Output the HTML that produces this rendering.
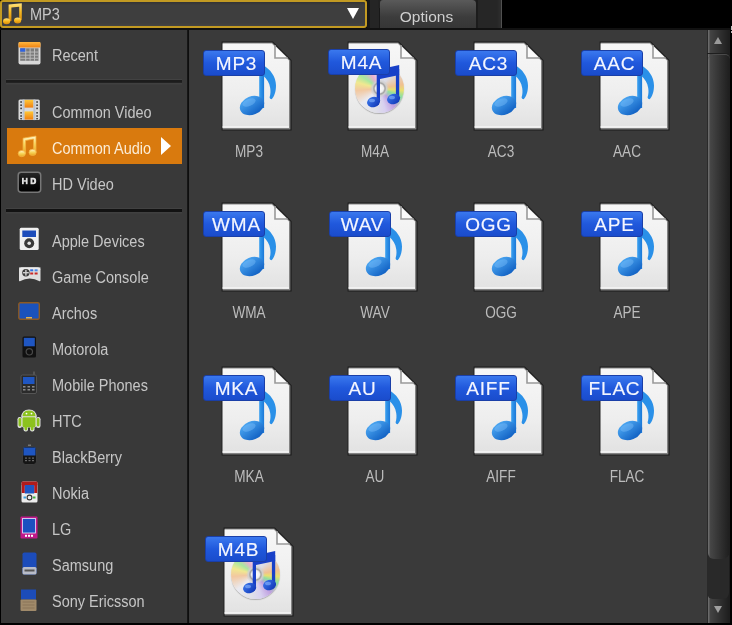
<!DOCTYPE html>
<html><head><meta charset="utf-8"><style>
*{box-sizing:border-box}
#root{position:absolute;left:0;top:0;width:732px;height:625px;overflow:hidden;background:#000;filter:blur(0.6px)}
body{margin:0;width:732px;height:625px;background:#000;position:relative;overflow:hidden;font-family:"Liberation Sans",sans-serif}
.a{position:absolute}
#dd{left:0;top:0;width:367px;height:28px;border:2px solid #c29a22;border-radius:3px;background:linear-gradient(#333 0,#3e3e3e 3px,#3e3e3e 21px,#444 24px)}
#ddtxt{left:28px;top:5px;font-size:14.5px;color:#c8c8c8;line-height:16px;transform:scaleY(1.12);transform-origin:0 9px}
#ddarr{left:345px;top:6px;width:0;height:0;border-left:6px solid transparent;border-right:6px solid transparent;border-top:11px solid #fff}
#gap{left:367px;top:0;width:13px;height:28px;background:linear-gradient(90deg,#161616 0,#1a1a1a 3px,#252525 3.5px,#252525 12px,#181818 12.5px)}
#tab{left:380px;top:0;width:96px;height:28px;border-radius:3px 4px 0 0;background:linear-gradient(#5a5a5a,#3c3c3c 60%,#363636);color:#cfcfcf;font-size:15.5px;text-align:center;line-height:33px;padding-right:3px}
#tr{left:476px;top:0;width:26px;height:28px;background:linear-gradient(90deg,#1c1c1c 0,#1c1c1c 1.5px,#262626 2px,#262626 21px,#2c2c2c 24px);border-right:1.5px solid #505050}
#hl{left:0;top:28px;width:732px;height:2px;background:#111}
#side{left:1px;top:30px;width:187px;height:593px;background:#393939}
#div{left:187px;top:30px;width:2px;height:593px;background:linear-gradient(90deg,#1a1a1a,#0a0a0a)}
#main{left:189px;top:30px;width:518px;height:593px;background:#3a3a3a}
#sb{z-index:0;left:707px;top:30px;width:23px;height:593px;background:linear-gradient(90deg,#2a2a2a 0,#2a2a2a 1px,#6a6a6a 1px,#6a6a6a 2px,#444 3px,#1e1e1e 22px)}
#bot{left:0;top:623px;width:732px;height:2px;background:#000}
.sep{left:6px;width:176px;height:3px;background:#1e1e1e;box-shadow:0 -1px 0 #424242,0 1.5px 0 #404040}
.it{left:52px;font-size:14.5px;transform:scaleY(1.12);transform-origin:0 8.5px;color:#c6c6c6;height:16px;line-height:16px;white-space:nowrap}
.it.sel{color:#fbecd6}
#sel{left:7px;top:128px;width:175px;height:36px;background:#d97a0e}
#selarr{left:161px;top:137px;width:0;height:0;border-top:9.5px solid transparent;border-bottom:9.5px solid transparent;border-left:10px solid #fff}
.doc{overflow:visible}
.lbl{width:126px;font-size:13.6px;transform:scaleY(1.2);transform-origin:0 12.7px;color:#bcbcbc;text-align:center;line-height:15px}
.tg{width:62px;height:25.5px;border-radius:3px;background:linear-gradient(#3a78ee,#2058dc 50%,#1a4ccc);border:1px solid #1a3fa8;color:#f4f6ff;font-size:19px;letter-spacing:0.8px;text-indent:5px;line-height:25px;-webkit-text-stroke:0.15px #f4f6ff;text-align:center}
.cd{width:49px;height:49px;border-radius:50%;background:radial-gradient(circle,#fff 0,#f0f0f0 4px,#a0a0a0 5.5px,#d0d0d0 7px,rgba(230,230,235,0) 9.5px),conic-gradient(from 0deg,#e4e4ec 0deg,#dcdce6 40deg,#f0c090 80deg,#e8e070 95deg,#90e0a0 110deg,#c0a0e0 140deg,#d8d0f0 165deg,#e0e0e8 190deg,#eaeaf0 230deg,#f2c8a0 265deg,#f0e890 285deg,#a8e8a0 305deg,#e8b0d0 330deg,#e4e4ec 360deg);box-shadow:0 1px 1px rgba(0,0,0,.25)}
#sbup{left:0;top:0;width:23px;height:24px;border-bottom:1px solid #1e1e1e}
#sbup:after{content:"";position:absolute;left:7px;top:7px;border-left:4px solid transparent;border-right:4px solid transparent;border-bottom:7.5px solid #9a9a9a}
#thumb{left:1px;top:24px;width:22px;height:505px;border-radius:6px 5px 8px 6px;background:linear-gradient(90deg,#6a6a6a 0,#6a6a6a 1px,#474747 2px,#3a3a3a 8px,#1f1f1f 21px);border-top:1px solid #4a4a4a}
#track{left:0;top:515px;width:22px;height:54px;background:#292929;border-radius:0 0 6px 6px;z-index:-1}
#sbdn{left:0;top:566px;width:23px;height:27px;z-index:-2}
#sbdn:after{content:"";position:absolute;left:7px;top:10px;border-left:4px solid transparent;border-right:4px solid transparent;border-top:7.5px solid #a0a0a0}
.wm{left:731px;width:1px;background:#bdbdbd}
#div2{left:189px;top:30px;width:1px;height:593px;background:#404040}
#tabbg{left:378px;top:0;width:100px;height:8px;background:#222}

</style></head><body><div id="root">
<div class="a" id="dd"><div class="a" id="ddnote"></div><span class="a" id="ddtxt">MP3</span><div class="a" id="ddarr"></div></div>
<div class="a" id="gap"></div>
<div class="a" id="tabbg"></div>
<div class="a" id="tab"><span>Options</span></div>
<div class="a" id="tr"></div>
<div class="a" id="hl"></div>
<div class="a" id="side"></div>
<div class="a" id="div"></div>
<div class="a" id="div2"></div>
<div class="a" id="main"></div>
<div class="a" id="sb"><div class="a" id="sbup"></div><div class="a" id="thumb"></div><div class="a" id="track"></div><div class="a" id="sbdn"></div></div>
<div class="a" id="bot"></div>
<div class="a wm" style="top:26px;height:4px"></div><div class="a wm" style="top:31px;height:2px"></div>
<div class="a sep" style="top:80px;height:3px;background:linear-gradient(#1c1c1c 70%,#2a2a2a)"></div>
<div class="a sep" style="top:209px;height:2.5px;background:#121212"></div>
<div class="a" id="sel"></div>
<div class="a" id="selarr"></div>
<svg width="0" height="0" style="position:absolute">
<defs>
<linearGradient id="paper" x1="0" y1="0" x2="0" y2="1"><stop offset="0" stop-color="#f7f7f7"/><stop offset="0.6" stop-color="#eeeeee"/><stop offset="1" stop-color="#e2e2e2"/></linearGradient>
<linearGradient id="blue" x1="0.2" y1="0" x2="0.6" y2="1"><stop offset="0" stop-color="#4eaaf4"/><stop offset="1" stop-color="#1262c4"/></linearGradient>
<symbol id="paperdoc" viewBox="0 0 74 94">
<path d="M1.6 2.4 H52.8 L71.6 21.2 V91.6 H1.6 Z" fill="#141414" opacity="0.8"/>
<path d="M2.6 3.4 H52.3 L70.4 21.5 V90.4 H2.6 Z" fill="#848484"/>
<path d="M2.6 4.4 H51.8 L69 21.6 V88.8 H2.6 Z" fill="url(#paper)"/>
<rect x="2.6" y="87.2" width="66.4" height="1.6" fill="#f4f4f4"/>
<path d="M55.2 7 V18.6 H67 Z" fill="#fbfbfb"/>
<path d="M55 6 V19 H67.8" fill="none" stroke="#9a9a9a" stroke-width="1.6"/>
</symbol>
<symbol id="ndoc" viewBox="0 0 74 94">
<use href="#paperdoc"/>
<linearGradient id="stemg" x1="0" y1="0" x2="1" y2="0"><stop offset="0" stop-color="#3aa0f0"/><stop offset="1" stop-color="#1a78d8"/></linearGradient>
<rect x="39.2" y="22" width="4.9" height="47" fill="url(#stemg)"/>
<path d="M43 26 C50 30 56 37.5 56 46.5 C56 53 54.2 57.5 51.6 60.3 C50.6 60.3 49.6 59.5 49.6 58.3 C50.6 55 50.7 52 50.2 49 C49.6 44 47 40 43 36.5 Z" fill="#2a90e8"/>
<ellipse cx="32" cy="66.5" rx="12.6" ry="9.1" transform="rotate(-22 32 66.5)" fill="url(#blue)"/>
<ellipse cx="29" cy="63.5" rx="7" ry="3.5" transform="rotate(-22 29 63.5)" fill="#8cc8ff" opacity="0.35"/>
</symbol>
<symbol id="cdnotes" viewBox="0 0 74 94">
<linearGradient id="nb" x1="0" y1="0" x2="1" y2="1"><stop offset="0" stop-color="#3d7cf0"/><stop offset="1" stop-color="#0c2fb0"/></linearGradient>
<path d="M30.7 31 L53.2 26 V36 L34 40 V61 H30.7 Z" fill="#1840c8"/>
<rect x="49.9" y="30" width="3.3" height="29" fill="#1840c8"/>
<ellipse cx="27.6" cy="63" rx="6.6" ry="5.2" transform="rotate(-15 27.6 63)" fill="url(#nb)"/>
<ellipse cx="47.6" cy="60" rx="6.6" ry="5.2" transform="rotate(-15 47.6 60)" fill="url(#nb)"/>
<ellipse cx="26" cy="61.5" rx="3" ry="1.8" fill="#8ab8ff" opacity="0.6"/>
<ellipse cx="46" cy="58.5" rx="3" ry="1.8" fill="#8ab8ff" opacity="0.6"/>
</symbol>
</defs></svg>
<svg class="a" style="left:0;top:0" width="44" height="30" viewBox="0 0 44 30">
<defs><linearGradient id="gold" x1="0" y1="0" x2="0" y2="1"><stop offset="0" stop-color="#ffe27a"/><stop offset="0.5" stop-color="#f5b71f"/><stop offset="1" stop-color="#d98a0a"/></linearGradient></defs>
<path d="M8.6 4.5 L21.8 3.3 V20 H19.2 V6.8 L11.4 7.6 V21 H8.6 Z" fill="url(#gold)"/>
<ellipse cx="6.6" cy="21.3" rx="3.6" ry="3" fill="url(#gold)"/>
<ellipse cx="17.6" cy="20.4" rx="3.6" ry="3" fill="url(#gold)"/>
</svg>
<svg class="a" style="left:17px;top:41px" width="25" height="25" viewBox="0 0 25 25">
<defs><linearGradient id="calo" x1="0" y1="0" x2="0" y2="1"><stop offset="0" stop-color="#ffb640"/><stop offset="1" stop-color="#ee8210"/></linearGradient></defs>
<rect x="1.5" y="1" width="22" height="22.5" rx="2" fill="#d8d8d8"/>
<rect x="1.5" y="1" width="22" height="5.5" rx="1" fill="url(#calo)"/>
<rect x="3.2" y="7.3" width="18.3" height="12.5" fill="#7c7c7c"/>
<g fill="#bdbdbd"><rect x="8.2" y="7.3" width="1" height="12.5"/><rect x="12.6" y="7.3" width="1" height="12.5"/><rect x="17" y="7.3" width="1" height="12.5"/><rect x="3.2" y="10.6" width="18.3" height="0.9"/><rect x="3.2" y="13.7" width="18.3" height="0.9"/><rect x="3.2" y="16.8" width="18.3" height="0.9"/></g>
<rect x="3.2" y="7.3" width="5" height="3.4" fill="#2f63e0"/>
</svg>
<svg class="a" style="left:18px;top:99px" width="23" height="22" viewBox="0 0 23 22">
<defs><linearGradient id="flg" x1="0" y1="0" x2="0" y2="1"><stop offset="0" stop-color="#ffc838"/><stop offset="1" stop-color="#f07e10"/></linearGradient></defs>
<rect x="0.5" y="0.6" width="21.3" height="20.5" rx="1.5" fill="#dadada"/>
<rect x="4.6" y="0.6" width="2" height="20.5" fill="#b8c4d4"/><rect x="15.4" y="0.6" width="2" height="20.5" fill="#b8c4d4"/>
<rect x="6.6" y="0.9" width="8.6" height="7.7" fill="url(#flg)"/>
<rect x="6.6" y="12.4" width="8.6" height="8.2" fill="url(#flg)"/>
<g fill="#4a4a4a"><rect x="2.2" y="2.2" width="1.8" height="1.6"/><rect x="2.2" y="5.4" width="1.8" height="1.6"/><rect x="2.2" y="8.6" width="1.8" height="1.6"/><rect x="2.2" y="13" width="1.8" height="1.6"/><rect x="2.2" y="16.2" width="1.8" height="1.6"/><rect x="2.2" y="19" width="1.8" height="1.4"/>
<rect x="18.2" y="2.2" width="1.8" height="1.6"/><rect x="18.2" y="5.4" width="1.8" height="1.6"/><rect x="18.2" y="8.6" width="1.8" height="1.6"/><rect x="18.2" y="13" width="1.8" height="1.6"/><rect x="18.2" y="16.2" width="1.8" height="1.6"/><rect x="18.2" y="19" width="1.8" height="1.4"/></g>
</svg>
<svg class="a" style="left:17px;top:135px" width="22" height="24" viewBox="0 0 22 24">
<defs><linearGradient id="gold2" x1="0" y1="0" x2="0" y2="1"><stop offset="0" stop-color="#fff8d0"/><stop offset="0.45" stop-color="#f8d860"/><stop offset="1" stop-color="#e8a820"/></linearGradient></defs>
<g stroke="#f4b040" stroke-width="0.8"><path d="M6 3.2 L19 1 V17.5 H16.6 V4 L8.6 5.6 V18.5 H6 Z" fill="url(#gold2)"/>
<ellipse cx="4.8" cy="18.6" rx="3.6" ry="3.1" fill="url(#gold2)"/>
<ellipse cx="15.6" cy="17.4" rx="3.6" ry="3.1" fill="url(#gold2)"/></g>
</svg>
<svg class="a" style="left:17px;top:171px" width="25" height="23" viewBox="0 0 25 23">
<defs><linearGradient id="hdg" x1="0" y1="0" x2="0" y2="1"><stop offset="0" stop-color="#2a2a2a"/><stop offset="0.5" stop-color="#0c0c0c"/><stop offset="1" stop-color="#000"/></linearGradient></defs>
<rect x="1.2" y="1.2" width="22.5" height="20" rx="3" fill="url(#hdg)" stroke="#777" stroke-width="1.5"/>
<g fill="#e0e0e0"><rect x="5" y="6.8" width="1.8" height="6.4"/><rect x="8.8" y="6.8" width="1.8" height="6.4"/><rect x="6.5" y="9.2" width="2.5" height="1.5"/>
<path d="M13.5 6.8 H16.5 Q19.2 6.8 19.2 10 Q19.2 13.2 16.5 13.2 H13.5 Z M15.4 8.5 V11.5 H16.2 Q17.2 11.5 17.2 10 Q17.2 8.5 16.2 8.5 Z"/></g>
</svg>
<svg class="a" style="left:19px;top:227px" width="21" height="24" viewBox="0 0 21 24">
<rect x="0.7" y="0.7" width="19" height="22.3" rx="1.5" fill="#f0f0f0"/>
<rect x="3.3" y="3.5" width="13.7" height="6.5" fill="#1c4cba"/>
<circle cx="10.2" cy="16.2" r="5" fill="#3a3a3a"/>
<circle cx="10.2" cy="16.2" r="1.8" fill="#e8e8e8"/>
</svg>
<svg class="a" style="left:18px;top:266px" width="24" height="17" viewBox="0 0 24 17">
<path d="M1 4 Q1 1.5 3.5 1.3 H19.5 Q22.5 1.5 22.5 4 V14.5 Q22.5 15.6 21 15 Q17 12.5 11.7 12.5 Q6.5 12.5 2.5 15 Q1 15.6 1 14.5 Z" fill="#dedede"/>
<rect x="1" y="1.3" width="21.5" height="2.5" fill="#f2f2f2" opacity="0.7"/>
<circle cx="7.9" cy="6.7" r="3.7" fill="#3a3a3a"/>
<rect x="7.2" y="3.8" width="1.4" height="5.8" fill="#cfcfcf"/><rect x="5" y="6" width="5.8" height="1.4" fill="#cfcfcf"/>
<rect x="12.2" y="3.3" width="3" height="2" fill="#3370e0"/><rect x="16.6" y="3.3" width="3" height="2" fill="#4a8ae8"/>
<rect x="12.2" y="6.5" width="3" height="2" fill="#c82828"/><rect x="16.6" y="6.5" width="3" height="2" fill="#c82828"/>
</svg>
<svg class="a" style="left:18px;top:302px" width="22" height="18" viewBox="0 0 22 18">
<rect x="0.8" y="0.8" width="20.5" height="16.5" rx="1.5" fill="#1b52bc" stroke="#8e5a22" stroke-width="1.4"/>
<rect x="8" y="15" width="6" height="1.5" fill="#e0b050"/>
</svg>
<svg class="a" style="left:22px;top:336px" width="15" height="22" viewBox="0 0 15 22">
<rect x="0.5" y="0.5" width="13.5" height="21" rx="1.5" fill="#111"/>
<rect x="1.8" y="1.8" width="11" height="8.5" fill="#1f56c2"/>
<circle cx="7.3" cy="15.8" r="3.2" fill="none" stroke="#4a4a4a" stroke-width="1.2"/>
</svg>
<svg class="a" style="left:20px;top:371px" width="18" height="23" viewBox="0 0 18 23">
<rect x="13" y="0.5" width="2" height="5" fill="#555"/>
<rect x="1" y="4" width="15.5" height="18.5" rx="1.5" fill="#2a2a2a" stroke="#555" stroke-width="1"/>
<rect x="3" y="6" width="11.5" height="7" fill="#1f56c2"/>
<g fill="#8a8a8a"><rect x="3" y="15" width="2.5" height="1.5"/><rect x="7.5" y="15" width="2.5" height="1.5"/><rect x="12" y="15" width="2.5" height="1.5"/><rect x="3" y="18" width="2.5" height="1.5"/><rect x="7.5" y="18" width="2.5" height="1.5"/><rect x="12" y="18" width="2.5" height="1.5"/></g>
</svg>
<svg class="a" style="left:17px;top:408px" width="24" height="24" viewBox="0 0 24 24">
<g fill="#fff" opacity="0.85"><rect x="4.5" y="5.5" width="15" height="14" rx="2"/><rect x="0.5" y="9" width="4.5" height="11" rx="2.2"/><rect x="19" y="9" width="4.5" height="11" rx="2.2"/><path d="M4.5 9 Q4.5 1.5 12 1.5 Q19.5 1.5 19.5 9 Z"/><rect x="6.5" y="17" width="4.5" height="6.5" rx="2"/><rect x="13" y="17" width="4.5" height="6.5" rx="2"/></g>
<g fill="#8cc21e"><rect x="5.5" y="9.2" width="13" height="10" rx="1.2"/><rect x="1.5" y="10" width="2.8" height="8.5" rx="1.4"/><rect x="19.7" y="10" width="2.8" height="8.5" rx="1.4"/><path d="M5.5 8.2 Q5.5 2.5 12 2.5 Q18.5 2.5 18.5 8.2 Z"/><rect x="7.5" y="17" width="2.8" height="5.5" rx="1.4"/><rect x="13.7" y="17" width="2.8" height="5.5" rx="1.4"/></g>
<circle cx="9.5" cy="5.6" r="0.9" fill="#fff"/><circle cx="14.5" cy="5.6" r="0.9" fill="#fff"/>
</svg>
<svg class="a" style="left:22px;top:444px" width="15" height="21" viewBox="0 0 15 21">
<rect x="6" y="0.5" width="3" height="2" fill="#777"/>
<rect x="0.5" y="2.5" width="14" height="18" rx="3" fill="#151515" stroke="#444" stroke-width="0.8"/>
<rect x="1.5" y="3.5" width="12" height="8" fill="#1f56c2"/>
<g fill="#6a6a6a"><rect x="3" y="13.5" width="2" height="1.2"/><rect x="6.5" y="13.5" width="2" height="1.2"/><rect x="10" y="13.5" width="2" height="1.2"/><rect x="3" y="16" width="2" height="1.2"/><rect x="6.5" y="16" width="2" height="1.2"/><rect x="10" y="16" width="2" height="1.2"/></g>
</svg>
<svg class="a" style="left:21px;top:481px" width="17" height="22" viewBox="0 0 17 22">
<rect x="0.5" y="0.5" width="16" height="21" rx="1.5" fill="#ececec"/>
<rect x="0.5" y="0.5" width="16" height="4" rx="1" fill="#b01c1c"/>
<rect x="0.8" y="3" width="3" height="9" fill="#b81818"/><rect x="13.2" y="3" width="3" height="9" fill="#b81818"/>
<rect x="3.8" y="4" width="9.4" height="8.5" fill="#1f56c2"/>
<circle cx="8.5" cy="16.5" r="2.4" fill="none" stroke="#333" stroke-width="1.1"/>
<rect x="2.5" y="15.5" width="2.5" height="2" fill="#3aa0e0"/><rect x="12" y="15.5" width="2.5" height="2" fill="#40b040"/>
</svg>
<svg class="a" style="left:20px;top:516px" width="18" height="23" viewBox="0 0 18 23">
<rect x="0.5" y="0.5" width="17" height="22" rx="1" fill="#c0188a"/>
<rect x="2.6" y="2.5" width="12.8" height="14.5" fill="#1c50c0" stroke="#e8e8ff" stroke-width="0.8"/>
<rect x="5" y="18.8" width="2" height="2" fill="#fff"/><rect x="8" y="18.8" width="2" height="2" fill="#fff"/><rect x="11" y="18.8" width="2" height="2" fill="#fff"/>
</svg>
<svg class="a" style="left:22px;top:552px" width="15" height="23" viewBox="0 0 15 23">
<rect x="0.5" y="0.5" width="14" height="22" rx="1.8" fill="#1c4cba"/>
<rect x="0.5" y="15" width="14" height="7.5" rx="1.5" fill="#b8bcc8"/>
<rect x="2.5" y="17.5" width="10" height="2" fill="#555"/>
</svg>
<svg class="a" style="left:20px;top:589px" width="17" height="23" viewBox="0 0 17 23">
<rect x="1" y="0.5" width="15" height="10" fill="#1c4cb8"/>
<rect x="0.5" y="10.5" width="16" height="11.5" rx="1" fill="#a08a6a"/>
<g fill="#8a7558"><rect x="2.5" y="12.5" width="12" height="1"/><rect x="2.5" y="15.5" width="12" height="1"/><rect x="2.5" y="18.5" width="12" height="1"/></g>
</svg>
<div class="a it" style="top:47px">Recent</div>
<div class="a it" style="top:104px">Common Video</div>
<div class="a it sel" style="top:140px">Common Audio</div>
<div class="a it" style="top:176px">HD Video</div>
<div class="a it" style="top:233px">Apple Devices</div>
<div class="a it" style="top:269px">Game Console</div>
<div class="a it" style="top:305px">Archos</div>
<div class="a it" style="top:341px">Motorola</div>
<div class="a it" style="top:377px">Mobile Phones</div>
<div class="a it" style="top:413px">HTC</div>
<div class="a it" style="top:449px">BlackBerry</div>
<div class="a it" style="top:485px">Nokia</div>
<div class="a it" style="top:521px">LG</div>
<div class="a it" style="top:557px">Samsung</div>
<div class="a it" style="top:593px">Sony Ericsson</div>
<svg class="a doc" style="left:220px;top:39px" width="74" height="94"><use href="#ndoc"/></svg>
<div class="a tg" style="left:203px;top:50px">MP3</div>
<div class="a lbl" style="left:186px;top:145px">MP3</div>
<svg class="a doc" style="left:346px;top:39px" width="74" height="94"><use href="#paperdoc"/></svg>
<div class="a cd" style="left:355px;top:64px"></div>
<svg class="a doc" style="left:346px;top:39px" width="74" height="94"><use href="#cdnotes"/></svg>
<div class="a tg" style="left:328px;top:49px">M4A</div>
<div class="a lbl" style="left:312px;top:145px">M4A</div>
<svg class="a doc" style="left:472px;top:39px" width="74" height="94"><use href="#ndoc"/></svg>
<div class="a tg" style="left:455px;top:50px">AC3</div>
<div class="a lbl" style="left:438px;top:145px">AC3</div>
<svg class="a doc" style="left:598px;top:39px" width="74" height="94"><use href="#ndoc"/></svg>
<div class="a tg" style="left:581px;top:50px">AAC</div>
<div class="a lbl" style="left:564px;top:145px">AAC</div>
<svg class="a doc" style="left:220px;top:200px" width="74" height="94"><use href="#ndoc"/></svg>
<div class="a tg" style="left:203px;top:211px">WMA</div>
<div class="a lbl" style="left:186px;top:306px">WMA</div>
<svg class="a doc" style="left:346px;top:200px" width="74" height="94"><use href="#ndoc"/></svg>
<div class="a tg" style="left:329px;top:211px">WAV</div>
<div class="a lbl" style="left:312px;top:306px">WAV</div>
<svg class="a doc" style="left:472px;top:200px" width="74" height="94"><use href="#ndoc"/></svg>
<div class="a tg" style="left:455px;top:211px">OGG</div>
<div class="a lbl" style="left:438px;top:306px">OGG</div>
<svg class="a doc" style="left:598px;top:200px" width="74" height="94"><use href="#ndoc"/></svg>
<div class="a tg" style="left:581px;top:211px">APE</div>
<div class="a lbl" style="left:564px;top:306px">APE</div>
<svg class="a doc" style="left:220px;top:364px" width="74" height="94"><use href="#ndoc"/></svg>
<div class="a tg" style="left:203px;top:375px">MKA</div>
<div class="a lbl" style="left:186px;top:470px">MKA</div>
<svg class="a doc" style="left:346px;top:364px" width="74" height="94"><use href="#ndoc"/></svg>
<div class="a tg" style="left:329px;top:375px">AU</div>
<div class="a lbl" style="left:312px;top:470px">AU</div>
<svg class="a doc" style="left:472px;top:364px" width="74" height="94"><use href="#ndoc"/></svg>
<div class="a tg" style="left:455px;top:375px">AIFF</div>
<div class="a lbl" style="left:438px;top:470px">AIFF</div>
<svg class="a doc" style="left:598px;top:364px" width="74" height="94"><use href="#ndoc"/></svg>
<div class="a tg" style="left:581px;top:375px">FLAC</div>
<div class="a lbl" style="left:564px;top:470px">FLAC</div>
<svg class="a doc" style="left:222px;top:525px" width="74" height="94"><use href="#paperdoc"/></svg>
<div class="a cd" style="left:231px;top:550px"></div>
<svg class="a doc" style="left:222px;top:525px" width="74" height="94"><use href="#cdnotes"/></svg>
<div class="a tg" style="left:205px;top:536px">M4B</div>
<div class="a lbl" style="left:186px;top:631px">M4B</div>
</div></body></html>
